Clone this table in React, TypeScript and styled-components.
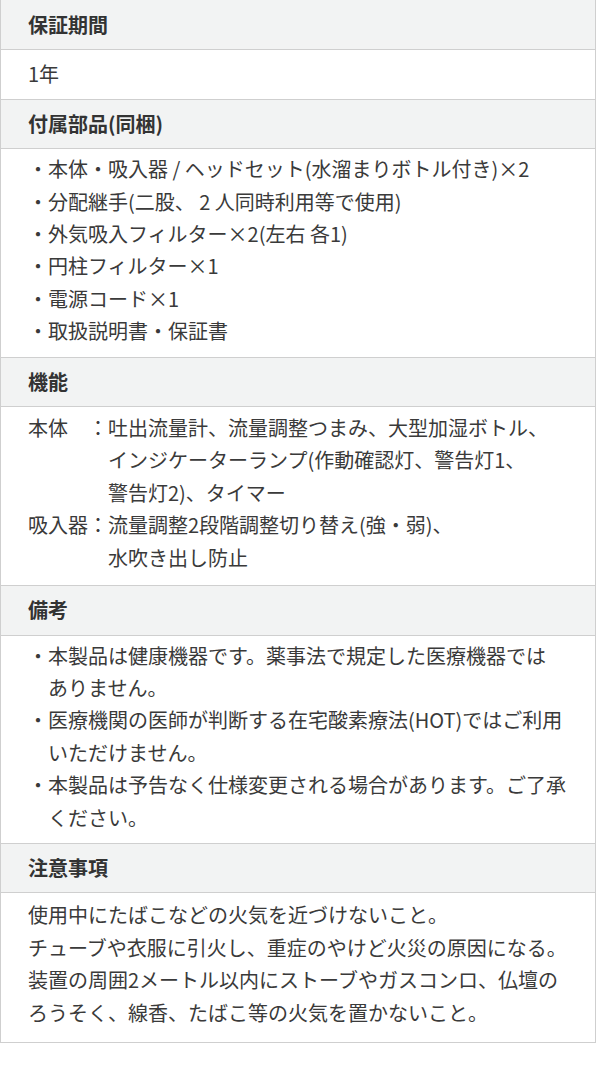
import React from "react";
import styled, { createGlobalStyle } from "styled-components";

const Global = createGlobalStyle`
  html, body { margin: 0; padding: 0; background: #fff; }
  body { font-family: "Noto Sans CJK JP", "Noto Sans", sans-serif; color: #333; }
`;

const Table = styled.div`
  width: 596px;
  border: 1px solid #cfcfcf;
  border-top: none;
  box-sizing: border-box;
`;

const Head = styled.div<{ $first?: boolean }>`
  background: #f2f3f3;
  border-bottom: 1px solid #cfcfcf;
  padding: ${(p) => (p.$first ? "9px" : "8px")} 27px 8px;
  font-size: 20px;
  line-height: 32.4px;
  font-weight: 700;
  color: #333;
`;

const Body = styled.div<{ $last?: boolean; $top: number; $bottom: number }>`
  border-bottom: ${(p) => (p.$last ? "none" : "1px solid #cfcfcf")};
  padding: ${(p) => p.$top}px 27px ${(p) => p.$bottom}px;
  font-size: 20px;
  line-height: 32.4px;
  color: #3a3a3a;
`;

const List = styled.ul`
  list-style: none;
  margin: 0;
  padding: 0;
`;

const Item = styled.li`
  padding-left: 20px;
  text-indent: -20px;
`;

const DefRow = styled.div`
  display: grid;
  grid-template-columns: 60px 20px 1fr;
`;

const Term = styled.span``;
const Colon = styled.span``;
const Desc = styled.span``;

const Line = styled.div``;

const sections = [
  { title: "保証期間", top: 8, bottom: 8, body: <Line>1年</Line> },
  {
    title: "付属部品(同梱)",
    top: 4,
    bottom: 9,
    body: (
      <List>
        <Item>・本体・吸入器 / ヘッドセット(水溜まりボトル付き)×2</Item>
        <Item>・分配継手(二股、 2 人同時利用等で使用)</Item>
        <Item>・外気吸入フィルター×2(左右 各1)</Item>
        <Item>・円柱フィルター×1</Item>
        <Item>・電源コード×1</Item>
        <Item>・取扱説明書・保証書</Item>
      </List>
    ),
  },
  {
    title: "機能",
    top: 5,
    bottom: 11,
    body: (
      <>
        <DefRow>
          <Term>本体</Term>
          <Colon>：</Colon>
          <Desc>
            吐出流量計、流量調整つまみ、大型加湿ボトル、
            <br />
            インジケーターランプ(作動確認灯、警告灯1、
            <br />
            警告灯2)、タイマー
          </Desc>
        </DefRow>
        <DefRow>
          <Term>吸入器</Term>
          <Colon>：</Colon>
          <Desc>
            流量調整2段階調整切り替え(強・弱)、
            <br />
            水吹き出し防止
          </Desc>
        </DefRow>
      </>
    ),
  },
  {
    title: "備考",
    top: 4,
    bottom: 8.6,
    body: (
      <List>
        <Item>・本製品は健康機器です。薬事法で規定した医療機器では<br />ありません。</Item>
        <Item>・医療機関の医師が判断する在宅酸素療法(HOT)ではご利用<br />いただけません。</Item>
        <Item>・本製品は予告なく仕様変更される場合があります。ご了承<br />ください。</Item>
      </List>
    ),
  },
  {
    title: "注意事項",
    top: 6.5,
    bottom: 13,
    body: (
      <>
        <Line>使用中にたばこなどの火気を近づけないこと。</Line>
        <Line>チューブや衣服に引火し、重症のやけど火災の原因になる。</Line>
        <Line>装置の周囲2メートル以内にストーブやガスコンロ、仏壇の</Line>
        <Line>ろうそく、線香、たばこ等の火気を置かないこと。</Line>
      </>
    ),
  },
];

export default function App() {
  return (
    <>
      <Global />
      <Table>
        {sections.map((s, i) => (
          <React.Fragment key={s.title}>
            <Head $first={i === 0}>{s.title}</Head>
            <Body $top={s.top} $bottom={s.bottom} $last={i === sections.length - 1}>
              {s.body}
            </Body>
          </React.Fragment>
        ))}
      </Table>
    </>
  );
}
